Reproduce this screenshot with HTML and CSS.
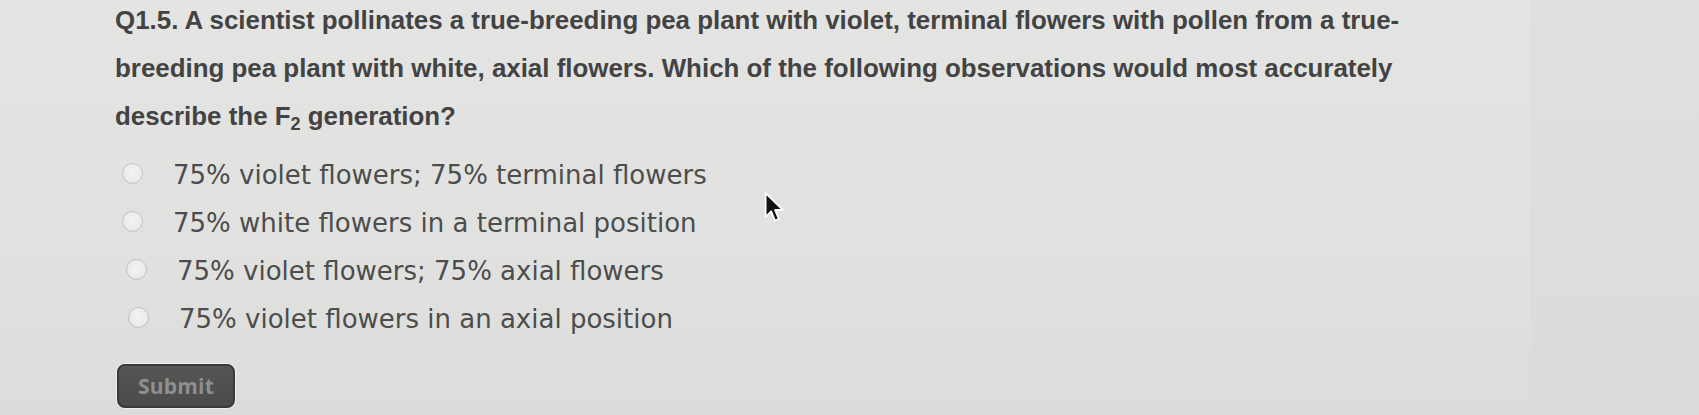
FILE: index.html
```html
<!DOCTYPE html>
<html lang="en">
<head>
<meta charset="utf-8">
<title>Q1.5</title>
<link rel="stylesheet" href="styles.css">
</head>
<body>
<div class="screen">
  <main class="quiz">
    <p class="question">Q1.5. A scientist pollinates a true-breeding pea plant with violet, terminal flowers with pollen from a true-<br>breeding pea plant with white, axial flowers. Which of the following observations would most accurately<br>describe the F<sub>2</sub> generation?</p>
    <ul class="options">
      <li class="option"><span class="radio"></span><span class="label">75% violet flowers; 75% terminal flowers</span></li>
      <li class="option"><span class="radio"></span><span class="label">75% white flowers in a terminal position</span></li>
      <li class="option"><span class="radio"></span><span class="label">75% violet flowers; 75% axial flowers</span></li>
      <li class="option"><span class="radio"></span><span class="label">75% violet flowers in an axial position</span></li>
    </ul>
    <button class="submit" type="button">Submit</button>
  </main>
  <aside class="edge"></aside>
  <svg class="cursor" width="22" height="34" viewBox="0 0 20 30" aria-hidden="true">
    <path d="M1.5 1.5 L1.5 23 L6.5 18 L10 26.5 L13.5 25 L10 16.8 L17 16.8 Z" fill="#111" stroke="#fff" stroke-width="1.6" stroke-linejoin="round"/>
  </svg>
</div>
</body>
</html>
```
FILE: styles.css
```css
* { box-sizing: border-box; }

html, body {
  margin: 0;
  padding: 0;
  width: 1699px;
  height: 415px;
  overflow: hidden;
}

.screen {
  position: relative;
  display: flex;
  width: 1699px;
  height: 415px;
  background: linear-gradient(180deg, #e4e5e3 0%, #e1e2e0 60%, #dcdddb 100%);
}

.quiz {
  flex: 1;
  padding: 0 0 0 115px;
}

.edge {
  width: 169px;
  background: linear-gradient(180deg, #dfe0df 0%, #dadbda 100%);
}

.question {
  margin: -3px 0 0;
  font-family: "Liberation Sans", Arial, sans-serif;
  font-weight: bold;
  font-size: 25.9px;
  line-height: 47.8px;
  color: #424342;
  white-space: nowrap;
}

.question sub {
  font-size: 18px;
  line-height: 0;
  vertical-align: -5px;
}

.options {
  list-style: none;
  margin: 10.5px 0 0;
  padding: 0 0 0 7px;
}

.option {
  display: flex;
  align-items: center;
  height: 48px;
  font-family: "DejaVu Sans", Verdana, sans-serif;
  font-size: 26px;
  color: #4c4d4c;
}

.option:nth-child(3) { padding-left: 4px; }
.option:nth-child(4) { padding-left: 6px; }

.radio {
  flex: none;
  width: 21px;
  height: 21px;
  margin-top: -3px;
  margin-right: 30px;
  border-radius: 50%;
  border: 1.5px solid #c0c1c0;
  background: radial-gradient(circle at 50% 45%, #f3f4f3 0%, #eaebea 60%, #dcdddc 100%);
}

.submit {
  display: block;
  margin: 21px 0 0 2px;
  width: 118px;
  height: 44px;
  padding: 0;
  border: 2px solid #383938;
  border-radius: 8px;
  background: linear-gradient(180deg, #555655 0%, #4a4b4a 100%);
  color: #8e8f8e;
  font-family: "Open Sans", "DejaVu Sans", sans-serif;
  font-weight: bold;
  font-size: 21px;
  letter-spacing: 0.2px;
  box-shadow: 0 0 0 1px #eeeeee;
}

.cursor {
  position: absolute;
  left: 764px;
  top: 191px;
}
```
